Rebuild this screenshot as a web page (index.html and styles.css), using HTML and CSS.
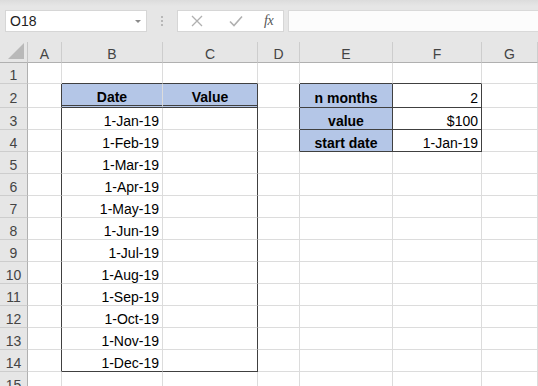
FILE: index.html
```html
<!DOCTYPE html>
<html>
<head>
<meta charset="utf-8">
<link rel="stylesheet" href="styles.css">
</head>
<body>
<div class="toolbar">
  <div class="namebox"><span class="ref">O18</span><span class="dd"></span></div>
  <div class="dots"><i></i><i></i><i></i></div>
  <div class="btns">
    <svg class="ico x" width="14" height="14" viewBox="0 0 14 14"><path d="M2 2 L12 12 M12 2 L2 12" stroke="#b0b0b0" stroke-width="1.3" fill="none"/></svg>
    <svg class="ico ok" width="16" height="14" viewBox="0 0 16 14"><path d="M2 7.5 L6 11.5 L14 2.5" stroke="#b0b0b0" stroke-width="1.6" fill="none"/></svg>
    <span class="fx">fx</span>
  </div>
  <div class="formula"></div>
</div>
<div class="sheet">
  <div class="corner"><span class="tri"></span></div>
  <div class="ch">A</div><div class="ch">B</div><div class="ch">C</div><div class="ch">D</div><div class="ch">E</div><div class="ch">F</div><div class="ch">G</div>

  <div class="rh">1</div><div class="c"></div><div class="c db"></div><div class="c db"></div><div class="c"></div><div class="c db"></div><div class="c db"></div><div class="c"></div>

  <div class="rh">2</div><div class="c dr"></div><div class="c hd dbl">Date</div><div class="c hd dbl dr">Value</div><div class="c dr"></div><div class="c hd db dr">n months</div><div class="c num db dr">2</div><div class="c"></div>

  <div class="rh">3</div><div class="c dr"></div><div class="c num">1-Jan-19</div><div class="c dr"></div><div class="c dr"></div><div class="c hd db dr">value</div><div class="c num db dr">$100</div><div class="c"></div>

  <div class="rh">4</div><div class="c dr"></div><div class="c num">1-Feb-19</div><div class="c dr"></div><div class="c dr"></div><div class="c hd db dr">start date</div><div class="c num db dr">1-Jan-19</div><div class="c"></div>

  <div class="rh">5</div><div class="c dr"></div><div class="c num">1-Mar-19</div><div class="c dr"></div><div class="c"></div><div class="c"></div><div class="c"></div><div class="c"></div>

  <div class="rh">6</div><div class="c dr"></div><div class="c num">1-Apr-19</div><div class="c dr"></div><div class="c"></div><div class="c"></div><div class="c"></div><div class="c"></div>

  <div class="rh">7</div><div class="c dr"></div><div class="c num">1-May-19</div><div class="c dr"></div><div class="c"></div><div class="c"></div><div class="c"></div><div class="c"></div>

  <div class="rh">8</div><div class="c dr"></div><div class="c num">1-Jun-19</div><div class="c dr"></div><div class="c"></div><div class="c"></div><div class="c"></div><div class="c"></div>

  <div class="rh">9</div><div class="c dr"></div><div class="c num">1-Jul-19</div><div class="c dr"></div><div class="c"></div><div class="c"></div><div class="c"></div><div class="c"></div>

  <div class="rh">10</div><div class="c dr"></div><div class="c num">1-Aug-19</div><div class="c dr"></div><div class="c"></div><div class="c"></div><div class="c"></div><div class="c"></div>

  <div class="rh">11</div><div class="c dr"></div><div class="c num">1-Sep-19</div><div class="c dr"></div><div class="c"></div><div class="c"></div><div class="c"></div><div class="c"></div>

  <div class="rh">12</div><div class="c dr"></div><div class="c num">1-Oct-19</div><div class="c dr"></div><div class="c"></div><div class="c"></div><div class="c"></div><div class="c"></div>

  <div class="rh">13</div><div class="c dr"></div><div class="c num">1-Nov-19</div><div class="c dr"></div><div class="c"></div><div class="c"></div><div class="c"></div><div class="c"></div>

  <div class="rh">14</div><div class="c dr"></div><div class="c num db">1-Dec-19</div><div class="c db dr"></div><div class="c"></div><div class="c"></div><div class="c"></div><div class="c"></div>

  <div class="rh">15</div><div class="c"></div><div class="c"></div><div class="c"></div><div class="c"></div><div class="c"></div><div class="c"></div><div class="c"></div>
</div>
</body>
</html>
```

FILE: styles.css
```css
html, body {
  margin: 0;
  padding: 0;
  background: #ffffff;
  overflow: hidden;
}
body {
  width: 538px;
  height: 386px;
  font-family: "Liberation Sans", Arial, sans-serif;
  color: #000;
}
.toolbar {
  height: 42px;
  background: linear-gradient(#dcdcdc 0px, #e6e6e6 6px, #e6e6e6 100%);
  display: flex;
  align-items: flex-start;
  padding-top: 10px;
  box-sizing: border-box;
}
.namebox {
  margin-left: 5px;
  width: 142px;
  height: 22px;
  background: #fff;
  box-sizing: border-box;
  border: 1px solid #d6d6d6;
  display: flex;
  align-items: center;
  justify-content: space-between;
  padding: 0 4px 0 4px;
  font-size: 14px;
  color: #222;
}
.dd {
  width: 0;
  height: 0;
  border-left: 3px solid transparent;
  border-right: 3px solid transparent;
  border-top: 3px solid #8a8a8a;
  margin-right: 1px;
}
.dots {
  width: 30px;
  height: 22px;
  display: flex;
  flex-direction: column;
  align-items: center;
  justify-content: center;
  gap: 2px;
}
.dots i {
  width: 2px;
  height: 2px;
  background: #b8b8b8;
  display: block;
}
.btns {
  width: 107px;
  height: 22px;
  background: #fff;
  box-sizing: border-box;
  border: 1px solid #d6d6d6;
  display: flex;
  align-items: center;
  padding-left: 12px;
}
.ico.x { margin-right: 24px; }
.ico.ok { margin-right: 20px; }
.fx {
  font-family: "Liberation Serif", serif;
  font-style: italic;
  font-size: 14px;
  color: #555;
  letter-spacing: -0.5px;
}
.formula {
  margin-left: 4px;
  flex: 1;
  height: 22px;
  background: #fcfcfc;
  box-sizing: border-box;
  border: 1px solid #d9d9d9;
  border-right: none;
}
.sheet {
  display: grid;
  grid-template-columns: 28px 34px 101px 95px 42px 93px 89px 56px;
  grid-template-rows: 21px 21px 24px repeat(12, 22px) 22px;
}
.sheet > div {
  box-sizing: border-box;
  display: flex;
  align-items: center;
  font-size: 14px;
  overflow: hidden;
  white-space: nowrap;
}
.corner {
  background: #e6e6e6;
  border-right: 1px solid #c6c6c6;
  border-bottom: 1px solid #b0b0b0;
  position: relative;
}
.tri {
  position: absolute;
  right: 3px;
  bottom: 3px;
  width: 0;
  height: 0;
  border-left: 16px solid transparent;
  border-bottom: 16px solid #b9b9b9;
}
.ch {
  background: #e6e6e6;
  border-right: 1px solid #cdcdcd;
  border-bottom: 1px solid #b0b0b0;
  justify-content: center;
  color: #444;
  font-size: 15px;
  padding-top: 3px;
}
.rh {
  background: #e6e6e6;
  border-right: 1px solid #b0b0b0;
  border-bottom: 1px solid #cdcdcd;
  justify-content: center;
  color: #444;
  font-size: 15px;
  padding-top: 4px;
}
.c {
  border-right: 1px solid #dcdcdc;
  border-bottom: 1px solid #dcdcdc;
  padding: 4px 3px 0 3px;
}
.num { justify-content: flex-end; }
.hd {
  background: #b4c6e7;
  font-weight: bold;
  justify-content: center;
}
.db { border-bottom: 1px solid #404040; }
.dr { border-right: 1px solid #404040; }
.dbl { border-bottom: 3px double #404040; }
```
